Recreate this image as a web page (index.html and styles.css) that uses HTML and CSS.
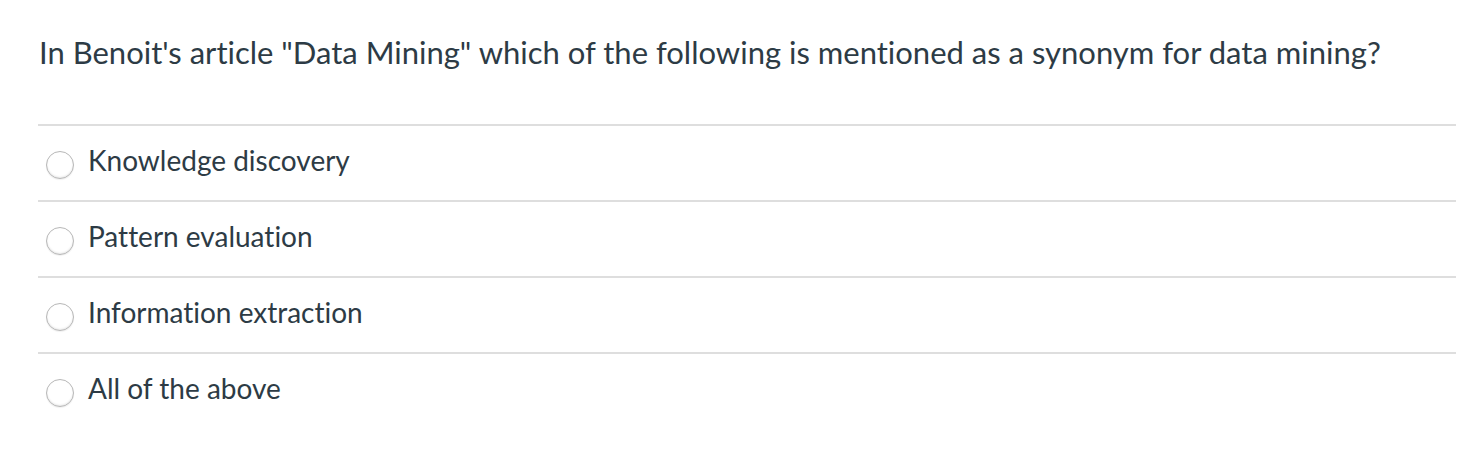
FILE: index.html
```html
<!DOCTYPE html>
<html>
<head>
<meta charset="utf-8">
<link rel="stylesheet" href="styles.css">
</head>
<body>
<div class="question">
  <div class="question-text">In Benoit's article "Data Mining" which of the following is mentioned as a synonym for data mining?</div>
  <div class="answers">
    <label class="answer"><span class="radio"></span><span class="answer-text">Knowledge discovery</span></label>
    <label class="answer"><span class="radio"></span><span class="answer-text">Pattern evaluation</span></label>
    <label class="answer"><span class="radio"></span><span class="answer-text">Information extraction</span></label>
    <label class="answer last"><span class="radio"></span><span class="answer-text">All of the above</span></label>
  </div>
</div>
</body>
</html>
```
FILE: styles.css
```css
html, body {
  margin: 0;
  padding: 0;
  background: #ffffff;
}
body {
  font-family: Lato, "Open Sans", sans-serif;
  color: #2d3b45;
  font-variant-ligatures: none;
}
.question {
  width: 1418px;
  padding-left: 38px;
}
.question-text {
  font-size: 31px;
  line-height: 36px;
  padding: 34px 0 0 1px;
  height: 90px;
  border-bottom: 2px solid #dedede;
}
.answers {
  display: flex;
  flex-direction: column;
}
.answer {
  display: flex;
  align-items: center;
  height: 74px;
  border-bottom: 2px solid #dedede;
}
.answer.last {
  border-bottom: none;
}
.radio {
  box-sizing: border-box;
  width: 28px;
  height: 28px;
  border: 1px solid #b8b8b8;
  border-radius: 50%;
  margin: 4px 14px 0 8px;
  box-shadow: inset 0 -1px 2px rgba(0,0,0,0.10), 0 1px 1px rgba(0,0,0,0.06);
  background: #fff;
}
.answer-text {
  font-size: 28px;
  padding-bottom: 6px;
}
```
